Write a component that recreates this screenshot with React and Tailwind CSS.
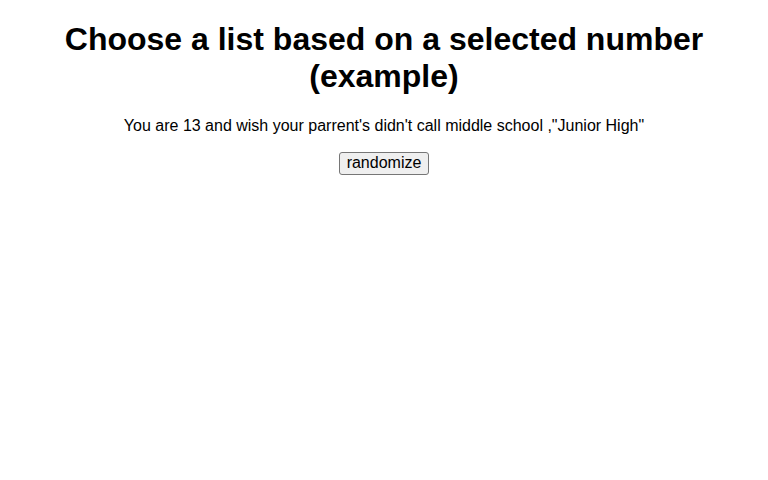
import React, { useState } from 'react';

const items = [
  { age: 13, text: "You are 13 and wish your parrent's didn't call middle school ,\"Junior High\"" },
  { age: 10, text: "You are 10 and think double digits make you a grown up" },
  { age: 16, text: "You are 16 and can't wait to drive" },
];

export default function App() {
  const [idx, setIdx] = useState(0);
  return (
    <div className="text-center text-black bg-white min-h-[480px]" style={{ fontFamily: '"Liberation Sans", Arial, sans-serif' }}>
      <h1 className="text-[32px] leading-[37px] font-bold pt-[21px] mb-[22px]">
        Choose a list based on a selected number (example)
      </h1>
      <p className="text-base leading-[18px] mb-4">{items[idx].text}</p>
      <button
        onClick={() => setIdx((i) => (i + 1) % items.length)}
        className="text-base leading-[18px] h-[23px] px-[7px] bg-[#efefef] border border-[#767676] rounded-[3px] hover:bg-[#e5e5e5]"
        style={{ fontFamily: '"Liberation Sans", Arial, sans-serif' }}
      >
        randomize
      </button>
    </div>
  );
}
